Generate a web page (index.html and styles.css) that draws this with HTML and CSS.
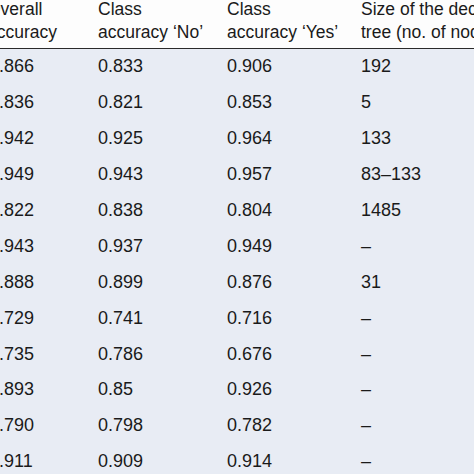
FILE: index.html
```html
<!DOCTYPE html>
<html>
<head>
<meta charset="utf-8">
<link rel="stylesheet" href="styles.css">
</head>
<body>
<div class="table">
  <div class="head">
    <div class="row head-row">
      <div class="first">Overall<br>accuracy</div>
      <div>Class<br>accuracy ‘No’</div>
      <div>Class<br>accuracy ‘Yes’</div>
      <div>Size of the decision<br>tree (no. of nodes)</div>
    </div>
  </div>
  <div class="body">
    <div class="row"><div>0.866</div><div>0.833</div><div>0.906</div><div>192</div></div>
    <div class="row"><div>0.836</div><div>0.821</div><div>0.853</div><div>5</div></div>
    <div class="row"><div>0.942</div><div>0.925</div><div>0.964</div><div>133</div></div>
    <div class="row"><div>0.949</div><div>0.943</div><div>0.957</div><div>83–133</div></div>
    <div class="row"><div>0.822</div><div>0.838</div><div>0.804</div><div>1485</div></div>
    <div class="row"><div>0.943</div><div>0.937</div><div>0.949</div><div>–</div></div>
    <div class="row"><div>0.888</div><div>0.899</div><div>0.876</div><div>31</div></div>
    <div class="row"><div>0.729</div><div>0.741</div><div>0.716</div><div>–</div></div>
    <div class="row"><div>0.735</div><div>0.786</div><div>0.676</div><div>–</div></div>
    <div class="row"><div>0.893</div><div>0.85</div><div>0.926</div><div>–</div></div>
    <div class="row"><div>0.790</div><div>0.798</div><div>0.782</div><div>–</div></div>
    <div class="row"><div>0.911</div><div>0.909</div><div>0.914</div><div>–</div></div>
  </div>
</div>
</body>
</html>
```

FILE: styles.css
```css
html {
  background: #e8ecf4;
}
body {
  margin: 0;
  overflow: hidden;
  font-family: "Liberation Sans", Arial, sans-serif;
  font-size: 18px;
  color: #1a1a1a;
}
.table {
  margin-left: -11px;
  width: 520px;
}
.row {
  display: grid;
  grid-template-columns: 109px 129px 134px 1fr;
  line-height: 35.9px;
  white-space: nowrap;
}
.head {
  background: #fdfdfd;
  height: 48px;
  overflow: hidden;
  border-bottom: 1.5px solid #2a2a2a;
}
.head-row {
  font-size: 17.5px;
  line-height: 22.5px;
  margin-top: -2px;
}
.head-row .first {
  margin-left: -2px;
}
.body {
  padding-top: 0.3px;
}
```
